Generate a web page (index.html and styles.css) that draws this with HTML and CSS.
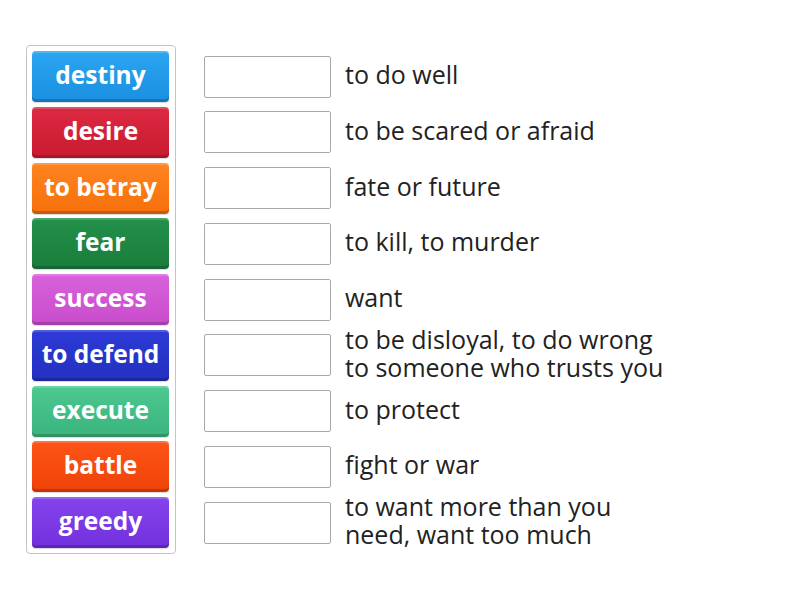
FILE: index.html
```html
<!DOCTYPE html>
<html>
<head>
<meta charset="utf-8">
<link rel="stylesheet" href="styles.css">
</head>
<body>
<div class="page">
  <div class="panel">
    <div class="tile c-blue">destiny</div>
    <div class="tile c-red">desire</div>
    <div class="tile c-orange">to betray</div>
    <div class="tile c-green">fear</div>
    <div class="tile c-pink">success</div>
    <div class="tile c-navy">to defend</div>
    <div class="tile c-teal">execute</div>
    <div class="tile c-flame">battle</div>
    <div class="tile c-purple">greedy</div>
  </div>
  <div class="answers">
    <div class="row"><div class="slot"></div><div class="def">to do well</div></div>
    <div class="row"><div class="slot"></div><div class="def">to be scared or afraid</div></div>
    <div class="row"><div class="slot"></div><div class="def">fate or future</div></div>
    <div class="row"><div class="slot"></div><div class="def">to kill, to murder</div></div>
    <div class="row"><div class="slot"></div><div class="def">want</div></div>
    <div class="row"><div class="slot"></div><div class="def">to be disloyal, to do wrong<br>to someone who trusts you</div></div>
    <div class="row"><div class="slot"></div><div class="def">to protect</div></div>
    <div class="row"><div class="slot"></div><div class="def">fight or war</div></div>
    <div class="row"><div class="slot"></div><div class="def">to want more than you<br>need, want too much</div></div>
  </div>
</div>
</body>
</html>
```
FILE: styles.css
```css
html, body {
  margin: 0;
  padding: 0;
  background: #fff;
}
.page {
  display: flex;
  align-items: flex-start;
  padding: 45px 0 0 26px;
  font-family: "Open Sans", "Liberation Sans", sans-serif;
}
.panel {
  width: 137px;
  padding: 5px 6px 5px 5px;
  border: 1px solid #c4c4c4;
  border-radius: 4px;
  display: flex;
  flex-direction: column;
  gap: 4.75px;
}
.tile {
  height: 51px;
  border-radius: 4px;
  color: #fff;
  font-weight: 700;
  font-size: 24.5px;
  display: flex;
  align-items: center;
  justify-content: center;
  white-space: nowrap;
  box-shadow: inset 0 -3px 0 rgba(0,0,0,0.18), inset 0 2px 0 rgba(255,255,255,0.18), 0 1px 1px rgba(0,0,0,0.15);
  padding-bottom: 4px;
  box-sizing: border-box;
}
.c-blue   { background: linear-gradient(#2aa6f2, #1b8fe0); }
.c-red    { background: linear-gradient(#dc2a42, #c81a30); }
.c-orange { background: linear-gradient(#ff8420, #f5700c); }
.c-green  { background: linear-gradient(#23914a, #1a7c3c); }
.c-pink   { background: linear-gradient(#d862da, #c84ccc); }
.c-navy   { background: linear-gradient(#2d3ad6, #2330c0); }
.c-teal   { background: linear-gradient(#4cc890, #3bb47e); }
.c-flame  { background: linear-gradient(#ff5418, #ee4208); }
.c-purple { background: linear-gradient(#8444ec, #7230dc); }

.answers {
  margin-left: 28px;
  padding-top: 6px;
  display: flex;
  flex-direction: column;
  gap: 4.75px;
}
.row {
  height: 51px;
  display: flex;
  align-items: center;
}
.slot {
  width: 125px;
  height: 40px;
  border: 1px solid #aaa;
  border-radius: 2px;
  flex: none;
}
.def {
  margin-left: 14px;
  margin-bottom: 5px;
  font-size: 25px;
  line-height: 28px;
  color: #222;
  white-space: nowrap;
}
```
